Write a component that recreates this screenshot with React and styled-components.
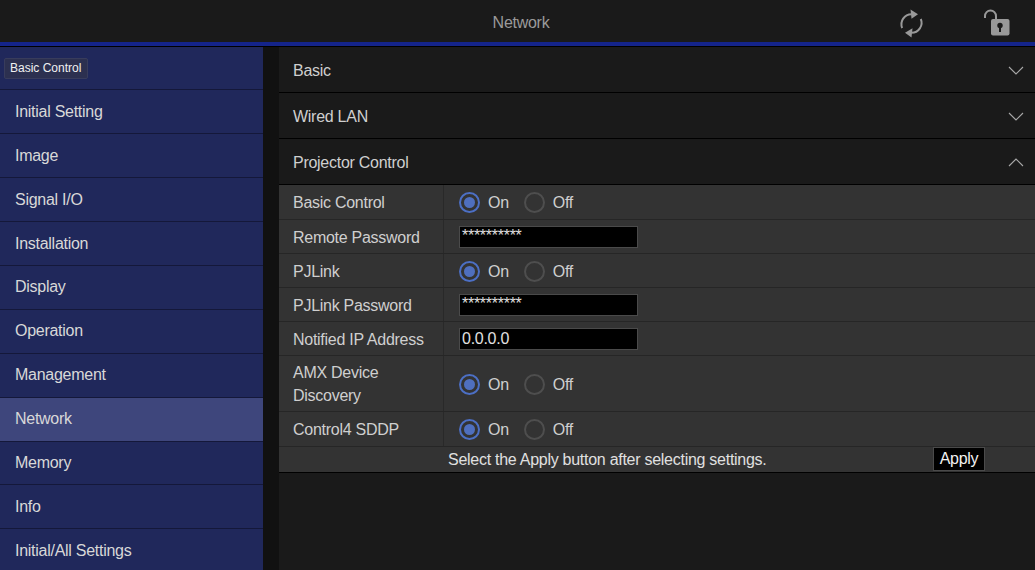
import React from "react"
import styled, { createGlobalStyle } from "styled-components"

const GlobalStyle = createGlobalStyle`
  html, body { margin: 0; padding: 0; height: 100%; background: #111; }
  body { font-family: "Liberation Sans", Arial, sans-serif; overflow: hidden; }
`

const Page = styled.div`
  width: 1035px;
  height: 570px;
  display: flex;
  flex-direction: column;
  overflow: hidden;
`

const TopBar = styled.header`
  height: 42px;
  flex: none;
  display: flex;
  align-items: center;
  background: #1a1a1a;
  border-bottom: 4px solid #14248a;
  position: relative;
  box-shadow: 0 1px 0 #000;
`

const Title = styled.div`
  flex: 1;
  text-align: center;
  padding: 3px 0 0 7px;
  font-size: 16px;
  letter-spacing: -0.27px;
  color: #9a9a9a;
`

const TopIcon = styled.svg`
  position: absolute;
  top: ${p => p.$top}px;
  left: ${p => p.$left}px;
`

const Body = styled.div`
  flex: 1;
  display: flex;
  margin-top: 1px;
  min-height: 0;
`

const Sidebar = styled.nav`
  width: 263px;
  flex: none;
  background: #20285b;
`

const SideRow = styled.div`
  height: ${p => (p.$badge ? "43.4px" : "43.9px")};
  box-sizing: border-box;
  display: flex;
  align-items: center;
  padding-left: ${p => (p.$badge ? "4px" : "15px")};
  font-size: 16px;
  letter-spacing: -0.27px;
  color: #d8d8d8;
  background: ${p => (p.$active ? "#3e467c" : "#20285b")};
  border-bottom: 1px solid #14183a;
`

const Badge = styled.span`
  font-size: 12px;
  letter-spacing: 0;
  line-height: 17px;
  padding: 1px 6px 1px 5px;
  color: #f0f0f0;
  background: #2c3050;
  border: 1px solid #383c5c;
  border-radius: 2px;
`

const Gutter = styled.div`
  width: 16px;
  flex: none;
  background: #111;
`

const Main = styled.main`
  flex: 1;
  background: #1a1a1a;
  font-size: 16px;
  letter-spacing: -0.27px;
`

const AccordionHead = styled.div`
  height: 46px;
  box-sizing: border-box;
  display: flex;
  align-items: center;
  justify-content: space-between;
  padding: 2px 11px 0 14px;
  color: #cfcfcf;
  background: #1a1a1a;
  border-bottom: 1px solid #000;
`

const ChevronIcon = styled.svg`
  margin-top: -1px;
`

const Panel = styled.div`
  background: #333;
  border-bottom: 1px solid #000;
`

const Row = styled.div`
  display: flex;
  height: ${p => p.$h}px;
  box-sizing: border-box;
  border-bottom: 1px solid #262626;
`

const Label = styled.div`
  width: 165px;
  flex: none;
  box-sizing: border-box;
  display: flex;
  align-items: center;
  padding: ${p => (p.$tall ? "0" : "1px")} 0 0 14px;
  line-height: 23px;
  color: #cfcfcf;
  border-right: 1px solid #292929;
`

const Value = styled.div`
  flex: 1;
  display: flex;
  align-items: center;
  padding: 1px 0 0 15px;
`

const RadioGroup = styled.div`
  display: flex;
  align-items: center;
  color: #cfcfcf;
`

const Radio = styled.span`
  width: 21px;
  height: 21px;
  box-sizing: border-box;
  flex: none;
  border-radius: 50%;
  border: 2px solid ${p => (p.$on ? "#4c6fc4" : "#4e4e4e")};
  display: flex;
  align-items: center;
  justify-content: center;
  margin-right: 8px;
  &::after {
    content: "";
    width: 11px;
    height: 11px;
    border-radius: 50%;
    background: ${p => (p.$on ? "#4f6fbe" : "transparent")};
  }
`

const RadioText = styled.span`
  padding-top: 1px;
  margin-right: ${p => (p.$first ? "15px" : "0")};
`

const TextField = styled.div`
  width: 179px;
  height: 22px;
  box-sizing: border-box;
  background: #000;
  border: 1px solid #4a4a4a;
  color: #e0e0e0;
  line-height: ${p => (p.$mask ? "17px" : "20px")};
  padding-left: 2px;
  overflow: hidden;
`

const Footer = styled.div`
  height: 25px;
  position: relative;
  display: flex;
  align-items: center;
  padding-left: 169px;
  color: #e0e0e0;
`

const ApplyButton = styled.button`
  position: absolute;
  left: 654px;
  top: 0;
  width: 52px;
  height: 24px;
  padding: 0;
  background: #000;
  border: 1px solid #4a4a4a;
  color: #f2f2f2;
  font-family: inherit;
  font-size: 16px;
  letter-spacing: -0.27px;
`

const Chevron = ({ up }) => (
  <ChevronIcon width="16" height="9" viewBox="0 0 16 9" fill="none" stroke="#a8a8a8" strokeWidth="1.1">
    <path d={up ? "M1 8 L8 1 L15 8" : "M1 1 L8 8 L15 1"} />
  </ChevronIcon>
)

const menu = ["Initial Setting", "Image", "Signal I/O", "Installation", "Display", "Operation", "Management", "Network", "Memory", "Info", "Initial/All Settings"]

const OnOff = () => (
  <RadioGroup>
    <Radio $on />
    <RadioText $first>On</RadioText>
    <Radio />
    <RadioText>Off</RadioText>
  </RadioGroup>
)

export default function App() {
  return (
    <Page>
      <GlobalStyle />
      <TopBar>
        <Title>Network</Title>
        <TopIcon $left={899} $top={9} width="25" height="29" viewBox="0 0 25 29">
          <g fill="none" stroke="#999" strokeWidth="2">
            <path d="M3.2 19 A10 10 0 0 1 12.5 5.2" />
            <path d="M21.8 10 A10 10 0 0 1 12.5 23.8" />
          </g>
          <path d="M11.5 0.5 L19 5.2 L12.5 9.8 Z M13.5 19.2 L6 23.8 L12.5 28.5 Z" fill="#999" />
        </TopIcon>
        <TopIcon $left={983} $top={9} width="28" height="27" viewBox="0 0 28 27">
          <path d="M2 9 V7 A5.5 5.5 0 0 1 13 7 V11" fill="none" stroke="#999" strokeWidth="2" />
          <rect x="8" y="10" width="18.500" height="16.500" rx="2" fill="#999" />
          <circle cx="17" cy="16.500" r="2.700" fill="#1a1a1a" />
          <rect x="16" y="17" width="2" height="6" fill="#1a1a1a" />
        </TopIcon>
      </TopBar>
      <Body>
        <Sidebar>
          <SideRow $badge>
            <Badge>Basic Control</Badge>
          </SideRow>
          {menu.map(m => (
            <SideRow key={m} $active={m === "Network"}>{m}</SideRow>
          ))}
        </Sidebar>
        <Gutter />
        <Main>
          <AccordionHead>Basic<Chevron /></AccordionHead>
          <AccordionHead>Wired LAN<Chevron /></AccordionHead>
          <AccordionHead>Projector Control<Chevron up /></AccordionHead>
          <Panel>
            <Row $h={35}><Label>Basic Control</Label><Value><OnOff /></Value></Row>
            <Row $h={34}><Label>Remote Password</Label><Value><TextField $mask>**********</TextField></Value></Row>
            <Row $h={34}><Label>PJLink</Label><Value><OnOff /></Value></Row>
            <Row $h={34}><Label>PJLink Password</Label><Value><TextField $mask>**********</TextField></Value></Row>
            <Row $h={34}><Label>Notified IP Address</Label><Value><TextField>0.0.0.0</TextField></Value></Row>
            <Row $h={56}><Label $tall>AMX Device<br />Discovery</Label><Value><OnOff /></Value></Row>
            <Row $h={35}><Label>Control4 SDDP</Label><Value><OnOff /></Value></Row>
            <Footer>
              Select the Apply button after selecting settings.
              <ApplyButton>Apply</ApplyButton>
            </Footer>
          </Panel>
        </Main>
      </Body>
    </Page>
  )
}
